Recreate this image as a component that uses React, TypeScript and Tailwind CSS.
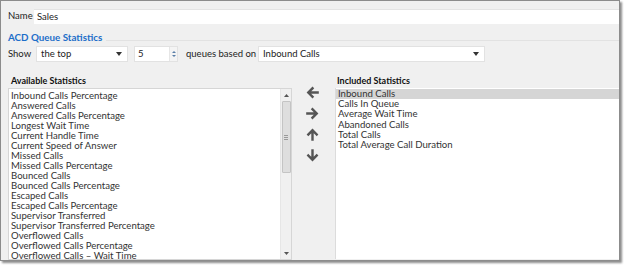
import React from "react";

const AVAILABLE = [
  "Inbound Calls Percentage",
  "Answered Calls",
  "Answered Calls Percentage",
  "Longest Wait Time",
  "Current Handle Time",
  "Current Speed of Answer",
  "Missed Calls",
  "Missed Calls Percentage",
  "Bounced Calls",
  "Bounced Calls Percentage",
  "Escaped Calls",
  "Escaped Calls Percentage",
  "Supervisor Transferred",
  "Supervisor Transferred Percentage",
  "Overflowed Calls",
  "Overflowed Calls Percentage",
  "Overflowed Calls – Wait Time",
];

const INCLUDED = [
  "Inbound Calls",
  "Calls In Queue",
  "Average Wait Time",
  "Abandoned Calls",
  "Total Calls",
  "Total Average Call Duration",
];

const font = "font-['Lato','Open_Sans',sans-serif]";

function Caret() {
  return (
    <svg width="6" height="4" viewBox="0 0 6 4" className="shrink-0">
      <path d="M0 0h6L3 4z" fill="#333" />
    </svg>
  );
}

function Select({ value, className }: { value: string; className: string }) {
  return (
    <div
      className={`flex h-[16px] items-center justify-between border border-[#e2e2e2] bg-white pl-[4px] pr-[5px] text-[9.5px] text-[#222] ${className}`}
    >
      <span className="whitespace-nowrap">{value}</span>
      <Caret />
    </div>
  );
}

function Arrow({ dir }: { dir: "left" | "right" | "up" | "down" }) {
  const rot = { left: 0, right: 180, up: 90, down: 270 }[dir];
  return (
    <svg width="13" height="13" viewBox="0 0 14 14" style={{ transform: `rotate(${rot}deg)` }}>
      <path
        d="M12.5 7H3M7 2.5L2.5 7L7 11.5"
        fill="none"
        stroke="#555"
        strokeWidth="2.6"
        strokeLinecap="square"
      />
    </svg>
  );
}

function Scrollbar() {
  return (
    <div className="flex w-[11px] shrink-0 flex-col items-center border-l border-[#e6e6e6] bg-[#f0f0f0]">
      <div className="flex h-[12px] items-center justify-center">
        <svg width="5" height="3" viewBox="0 0 5 3">
          <path d="M0 3L2.5 0L5 3z" fill="#555" />
        </svg>
      </div>
      <div className="flex h-[72px] w-[9px] flex-col items-center justify-center gap-[1px] rounded-[1px] border border-[#c4c4c4] bg-[#dedede]">
        <span className="h-px w-[4px] bg-[#9a9a9a]" />
        <span className="h-px w-[4px] bg-[#9a9a9a]" />
        <span className="h-px w-[4px] bg-[#9a9a9a]" />
      </div>
      <div className="flex-1" />
      <div className="flex h-[12px] items-center justify-center">
        <svg width="5" height="3" viewBox="0 0 5 3">
          <path d="M0 0h5L2.5 3z" fill="#555" />
        </svg>
      </div>
    </div>
  );
}

export default function App() {
  return (
    <div className={`h-[266px] w-[624px] bg-white ${font}`}>
      <div className="flex h-[261px] w-[620px] flex-col overflow-hidden border border-[#8c8c8c] bg-[#f0f0f0] shadow-[2px_2px_2px_rgba(0,0,0,0.45)]">
        {/* Name */}
        <div className="mt-[8px] flex items-center">
          <span className="w-[33px] shrink-0 pl-[7px] text-[9.5px] text-[#222]">Name</span>
          <div className="flex h-[15px] flex-1 items-center border-t border-[#e4e4e4] bg-white pl-[3px] text-[9.5px] text-[#222]">
            Sales
          </div>
        </div>

        {/* Section header */}
        <div className="mt-[6px] flex items-center gap-[4px] pl-[7px]">
          <span className="whitespace-nowrap text-[9.8px] font-bold leading-[14px] text-[#1c6ec9]">
            ACD Queue Statistics
          </span>
          <span className="mt-[7px] h-px flex-1 bg-[#e2e2e2]" />
        </div>

        {/* Show row */}
        <div className="mt-[2px] flex items-center pl-[7px]">
          <span className="w-[28px] shrink-0 text-[9.5px] text-[#222]">Show</span>
          <Select value="the top" className="w-[92px]" />
          <div className="ml-[6px] flex h-[16px] w-[44px] items-center justify-between border border-[#e2e2e2] bg-white pl-[3px] text-[9.5px] text-[#222]">
            <span>5</span>
            <div className="flex h-full w-[8px] flex-col items-center justify-center gap-[2px] border-l border-[#e6e6e6] bg-[#f4f4f4]">
              <svg width="4" height="2" viewBox="0 0 4 2">
                <path d="M0 2L2 0L4 2z" fill="#5a7fa8" />
              </svg>
              <svg width="4" height="2" viewBox="0 0 4 2">
                <path d="M0 0h4L2 2z" fill="#5a7fa8" />
              </svg>
            </div>
          </div>
          <span className="ml-[8px] w-[72px] shrink-0 whitespace-nowrap text-[9.5px] text-[#222]">queues based on</span>
          <Select value="Inbound Calls" className="w-[227px]" />
        </div>

        {/* Lists */}
        <div className="mt-[13px] flex min-h-0 flex-1">
          <div className="flex w-[291px] shrink-0 flex-col pl-[7px]">
            <span className="pl-[3px] text-[9px] font-bold leading-[12px] text-[#111]">Available Statistics</span>
            <div className="mt-[1px] flex min-h-0 flex-1 border border-[#d6d6d6] bg-white">
              <ul className="flex-1 overflow-hidden pl-[2px] pt-[2px] text-[9.6px] leading-[10px] text-[#333]">
                {AVAILABLE.map((s) => (
                  <li key={s} className="whitespace-nowrap">
                    {s}
                  </li>
                ))}
              </ul>
              <Scrollbar />
            </div>
          </div>

          <div className="flex w-[43px] shrink-0 flex-col items-center gap-[8px] pr-[3px] pt-[11px]">
            <Arrow dir="left" />
            <Arrow dir="right" />
            <Arrow dir="up" />
            <Arrow dir="down" />
          </div>

          <div className="flex flex-1 flex-col">
            <span className="pl-[2px] text-[9px] font-bold leading-[12px] text-[#111]">Included Statistics</span>
            <ul className="mb-[1px] mt-[1px] flex-1 border-l border-[#dcdcdc] bg-white pt-[1px] text-[9.6px] leading-[10.2px] text-[#333]">
              {INCLUDED.map((s, i) => (
                <li
                  key={s}
                  className={`whitespace-nowrap pl-[2px] ${i === 0 ? "bg-[#d5d5d5]" : ""}`}
                >
                  {s}
                </li>
              ))}
            </ul>
          </div>
        </div>
      </div>
    </div>
  );
}
